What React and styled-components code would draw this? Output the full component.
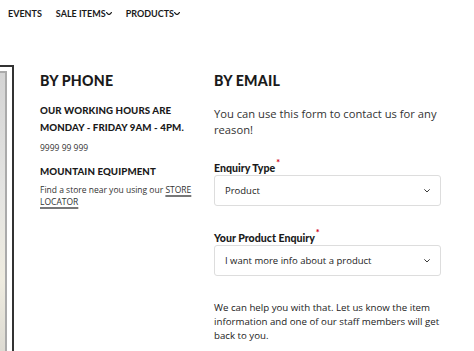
import React from 'react';
import styled, { createGlobalStyle } from 'styled-components';

const GlobalStyle = createGlobalStyle`
  html, body {
    margin: 0;
    padding: 0;
    background: #fff;
    overflow: hidden;
  }
  body {
    font-family: "Open Sans", "Liberation Sans", sans-serif;
    color: #222;
  }
`;

const Nav = styled.nav`
  display: flex;
  align-items: center;
  gap: 14px;
  height: 27px;
  padding-left: 8px;
`;

const NavItem = styled.span`
  display: flex;
  align-items: center;
  gap: 0;
  font-family: Lato, "Liberation Sans", sans-serif;
  font-weight: 700;
  font-size: 9px;
  color: #1a1a1a;
`;

const Main = styled.main`
  display: grid;
  grid-template-columns: 40px 174px 241px;
  margin-top: 38px;
  height: 300px;
`;

const Frame = styled.div`
  width: 14px;
  height: 100%;
  box-sizing: border-box;
  padding: 4px 5px 0 0;
  border-top: 2px solid #333;
  border-right: 2px solid #333;
`;

const FrameInner = styled.div`
  height: 100%;
  border-top: 2px solid #aaa;
  border-right: 2px solid #aaa;
  background: linear-gradient(180deg, #d4d4d4 0%, #e4e4e2 40%, #efece0 70%, #d9d7d0 100%);
`;

const Column = styled.section`
  display: flex;
  flex-direction: column;
  padding-top: 7px;
  padding-right: 14px;
`;

const Heading = styled.h2`
  margin: 0 0 12px;
  font-family: Lato, "Liberation Sans", sans-serif;
  font-weight: 900;
  font-size: 14.2px;
  line-height: 18px;
  letter-spacing: 0.2px;
  color: #1a1a1a;
`;

const SubHeading = styled.h3`
  margin: 0 0 ${({ $gap }) => $gap || 0}px;
  font-family: Lato, "Liberation Sans", sans-serif;
  font-weight: 900;
  font-size: 9.7px;
  line-height: 17px;
  letter-spacing: 0.1px;
  white-space: nowrap;
  color: #1a1a1a;
`;

const Small = styled.p`
  margin: 0 0 ${({ $gap }) => $gap || 0}px;
  font-size: 8.5px;
  line-height: 12px;
  color: #333;
`;

const Link = styled.a`
  color: #333;
  text-decoration: underline;
  text-decoration-color: #777;
  text-decoration-thickness: 2px;
  text-underline-offset: 2px;
`;

const Intro = styled.p`
  margin: 4px 0 23px;
  font-size: 11.2px;
  line-height: 16px;
  color: #333;
`;

const Label = styled.label`
  display: block;
  margin-bottom: 0;
  font-family: Lato, "Liberation Sans", sans-serif;
  font-weight: 900;
  font-size: 10.6px;
  line-height: 14px;
  color: #1a1a1a;
`;

const Req = styled.span`
  position: relative;
  top: -6px;
  margin-left: 1px;
  color: #d0021b;
  font-size: 9px;
  line-height: 0;
`;

const Select = styled.div`
  display: flex;
  align-items: center;
  justify-content: space-between;
  height: 29px;
  margin-bottom: ${({ $gap }) => $gap || 0}px;
  padding: 0 10px;
  border: 1px solid #ddd;
  border-radius: 3px;
  font-size: 9.5px;
  color: #222;
`;

const Note = styled.p`
  margin: 0;
  font-size: 9.7px;
  line-height: 14px;
  color: #222;
`;

const Chevron = ({ size = 7, weight = 1.5 }) => (
  <svg width={size} height={size * 0.6} viewBox="0 0 10 6" fill="none">
    <path d="M1 1l4 4 4-4" stroke="#222" strokeWidth={weight} strokeLinecap="round" strokeLinejoin="round" />
  </svg>
);

export default function App() {
  return (
    <>
      <GlobalStyle />
      <Nav>
        <NavItem>EVENTS</NavItem>
        <NavItem>SALE ITEMS<Chevron size={6} weight={2.2} /></NavItem>
        <NavItem>PRODUCTS<Chevron size={6} weight={2.2} /></NavItem>
      </Nav>
      <Main>
        <Frame>
          <FrameInner />
        </Frame>
        <Column>
          <Heading>BY PHONE</Heading>
          <SubHeading>OUR WORKING HOURS ARE</SubHeading>
          <SubHeading $gap={6}>MONDAY - FRIDAY 9AM - 4PM.</SubHeading>
          <Small $gap={9}>9999 99 999</Small>
          <SubHeading $gap={4}>MOUNTAIN EQUIPMENT</SubHeading>
          <Small>
            Find a store near you using our <Link href="#">STORE</Link> <Link href="#">LOCATOR</Link>
          </Small>
        </Column>
        <Column>
          <Heading>BY EMAIL</Heading>
          <Intro>You can use this form to contact us for any reason!</Intro>
          <Label>Enquiry Type<Req>*</Req></Label>
          <Select $gap={25}>
            <span>Product</span>
            <Chevron size={6} />
          </Select>
          <Label>Your Product Enquiry<Req>*</Req></Label>
          <Select $gap={25}>
            <span>I want more info about a product</span>
            <Chevron size={6} />
          </Select>
          <Note>
            We can help you with that. Let us know the item information and one of our staff members will get back to you.
          </Note>
        </Column>
      </Main>
    </>
  );
}
